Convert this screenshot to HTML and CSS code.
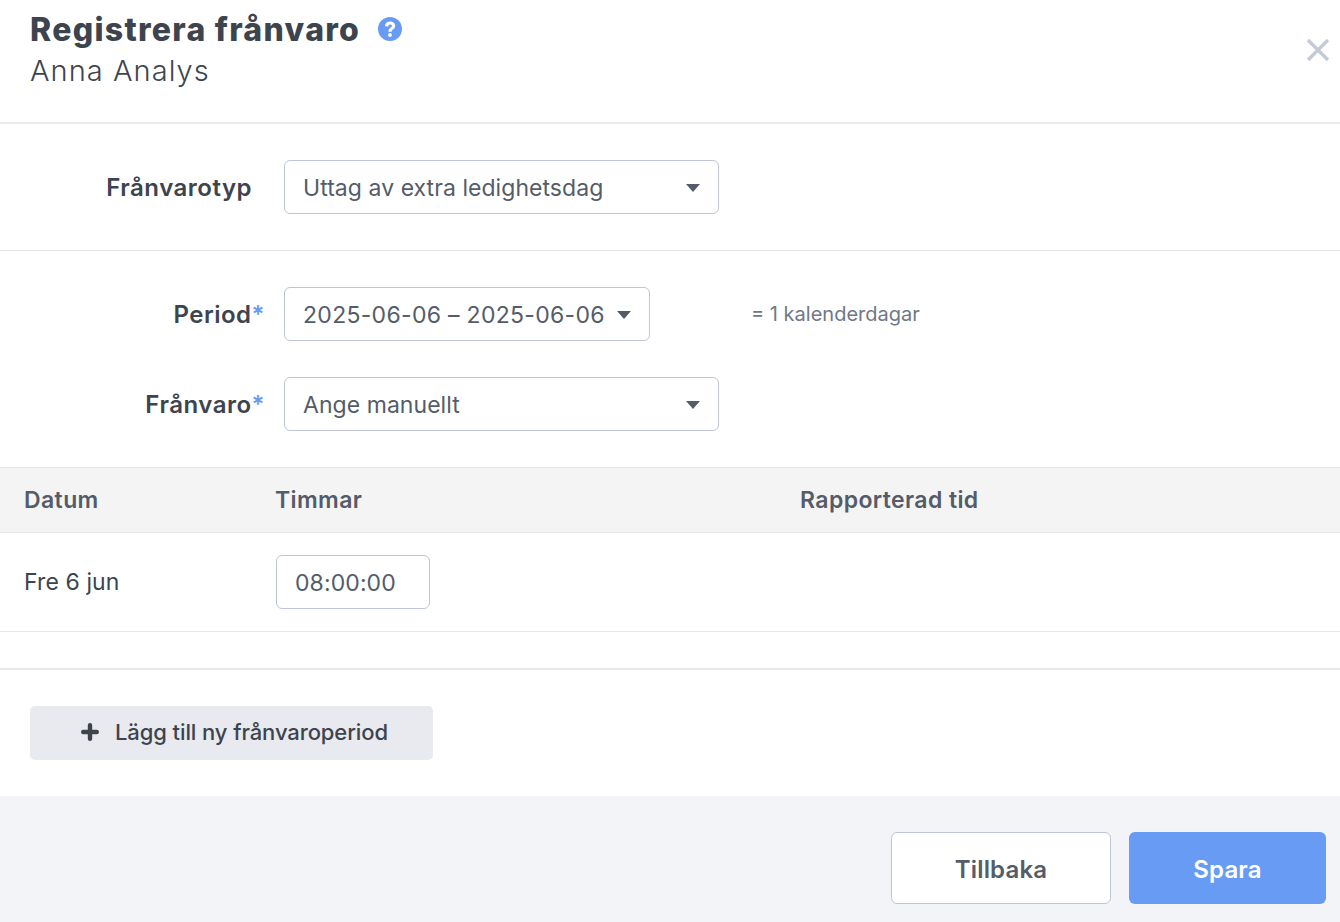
FILE: index.html
```html
<!DOCTYPE html>
<html lang="sv">
<head>
<meta charset="utf-8">
<title>Registrera frånvaro</title>
<link rel="stylesheet" href="styles.css">
</head>
<body>
<div class="dialog">
  <header class="head">
    <div class="titles">
      <div class="title-row">
        <h1 class="title">Registrera frånvaro</h1>
        <svg class="help" viewBox="0 0 24 24" width="24" height="24"><circle cx="12" cy="12" r="12" fill="#689bf4"/><path d="M6.9 9.2C7 6.3 9.1 4.6 12.1 4.6c3 0 5.1 1.7 5.1 4.2 0 1.8-1 2.8-2.2 3.6-1.1.7-1.4 1.1-1.4 2v.4h-3.1v-.6c0-1.7.6-2.6 1.9-3.5 1-.7 1.5-1.1 1.5-1.8 0-.8-.7-1.4-1.7-1.4-1.1 0-1.8.7-1.9 1.9z" fill="#fff"/><circle cx="12" cy="18" r="1.9" fill="#fff"/></svg>
      </div>
      <div class="subtitle">Anna Analys</div>
    </div>
    <svg class="close" viewBox="0 0 24 24" width="24" height="24"><path d="M2 2L22 22M22 2L2 22" stroke="#c3cbd9" stroke-width="3.4" fill="none"/></svg>
  </header>

  <section class="section type-section">
    <div class="field">
      <div class="label label-plain">Frånvarotyp</div>
      <div class="select wide"><span>Uttag av extra ledighetsdag</span><i class="caret"></i></div>
    </div>
  </section>

  <section class="section period-section">
    <div class="field">
      <div class="label">Period<span class="req">*</span></div>
      <div class="select period"><span class="date-range">2025-06-06 – 2025-06-06</span><i class="caret"></i></div>
      <div class="hint">= 1 kalenderdagar</div>
    </div>
    <div class="field">
      <div class="label">Frånvaro<span class="req">*</span></div>
      <div class="select wide"><span>Ange manuellt</span><i class="caret"></i></div>
    </div>
  </section>

  <section class="table">
    <div class="thead">
      <div class="head-date">Datum</div>
      <div class="head-hours">Timmar</div>
      <div>Rapporterad tid</div>
    </div>
    <div class="trow">
      <div class="cell-date">Fre 6 jun</div>
      <div class="time">08:00:00</div>
    </div>
    <div class="spacer"></div>
  </section>

  <section class="add-section">
    <div class="add-btn">
      <svg class="plus" viewBox="0 0 18 18" width="18" height="18"><path d="M9 2.2v13.6M2.2 9h13.6" stroke="#3e444e" stroke-width="4.4" stroke-linecap="round" fill="none"/></svg>
      <span>Lägg till ny frånvaroperiod</span>
    </div>
  </section>

  <footer class="foot">
    <div class="btn btn-back">Tillbaka</div>
    <div class="btn btn-save">Spara</div>
  </footer>
</div>
</body>
</html>
```
FILE: styles.css
```css
* { box-sizing: border-box; }
html, body { margin: 0; padding: 0; background: #fff; }
body { font-family: Inter, "Liberation Sans", sans-serif; color: #3e444e; }
.dialog { width: 1340px; height: 922px; display: flex; flex-direction: column; overflow: hidden; }

.head { height: 124px; flex: none; border-bottom: 2px solid #ebebeb; display: flex; justify-content: space-between; padding: 9px 10px 0 30px; }
.title-row { display: flex; align-items: center; gap: 18px; height: 42px; }
.title { margin: 0; font-family: Inter, sans-serif; font-size: 32px; font-weight: 800; letter-spacing: 1.3px; line-height: 42px; color: #3e444e; white-space: nowrap; }
.help { flex: none; margin-top: -3px; }
.subtitle { font-family: Inter, sans-serif; font-size: 29px; font-weight: 300; letter-spacing: 1.05px; line-height: 38px; margin-top: 1px; color: #3e444e; white-space: nowrap; }
.close { margin-top: 29px; flex: none; }

.section { flex: none; border-bottom: 1px solid #e2e4e8; padding: 36px 0; display: flex; flex-direction: column; gap: 36px; }
.type-section { height: 127px; }
.period-section { height: 217px; }
.field { display: flex; align-items: center; height: 54px; }
.label { width: 265px; margin-right: 19px; text-align: right; font-size: 24px; font-weight: 600; letter-spacing: .5px; color: #3e444e; white-space: nowrap; }
.label-plain { padding-right: 13px; }
.req { color: #689bf4; font-weight: 600; }
.select { height: 54px; border: 1px solid #bdc5d6; border-radius: 6px; padding: 1px 18px 0; display: flex; align-items: center; justify-content: space-between; font-size: 23px; letter-spacing: .05px; color: #545c69; background: #fff; white-space: nowrap; }
.wide { width: 435px; }
.period { width: 366px; }
.date-range { letter-spacing: .3px; }
.caret { width: 0; height: 0; border-left: 7px solid transparent; border-right: 7px solid transparent; border-top: 8px solid #545c69; flex: none; }
.hint { margin-left: 101px; font-size: 20px; color: #6f7887; white-space: nowrap; }

.table { flex: none; }
.thead { height: 65px; background: #f4f4f4; border-bottom: 1px solid #e8e9ed; display: flex; align-items: center; padding-left: 24px; font-size: 23px; font-weight: 600; letter-spacing: .4px; color: #545c69; }
.head-date { width: 251px; flex: none; }
.head-hours { width: 525px; flex: none; }
.trow { height: 99px; border-bottom: 1px solid #e8e9ed; display: flex; align-items: center; padding-left: 24px; }
.cell-date { width: 252px; flex: none; font-size: 23px; letter-spacing: .1px; color: #3e444e; }
.time { width: 154px; height: 54px; border: 1px solid #bdc5d6; border-radius: 6px; padding: 1px 0 0 18px; display: flex; align-items: center; font-size: 23px; letter-spacing: .1px; color: #545c69; }
.spacer { height: 36px; }

.add-section { flex: none; height: 128px; border-top: 2px solid #e8e9ed; padding: 36px 30px; }
.add-btn { width: 403px; height: 54px; background: #e9eaef; border-radius: 5px; padding: 0 0 2px 6px; display: flex; align-items: center; justify-content: center; gap: 16px; font-size: 22px; font-weight: 500; letter-spacing: -.1px; color: #3e444e; white-space: nowrap; }
.plus { flex: none; }

.foot { flex: 1; background: #f3f4f8; display: flex; justify-content: flex-end; gap: 18px; padding: 36px 14px 0 0; }
.btn { height: 72px; border-radius: 6px; padding-top: 2px; display: flex; align-items: center; justify-content: center; font-size: 24px; font-weight: 600; letter-spacing: .15px; }
.btn-back { width: 220px; background: #fff; border: 1px solid #bdc5d6; color: #545c69; }
.btn-save { width: 197px; background: #689bf4; color: #fff; }
```
